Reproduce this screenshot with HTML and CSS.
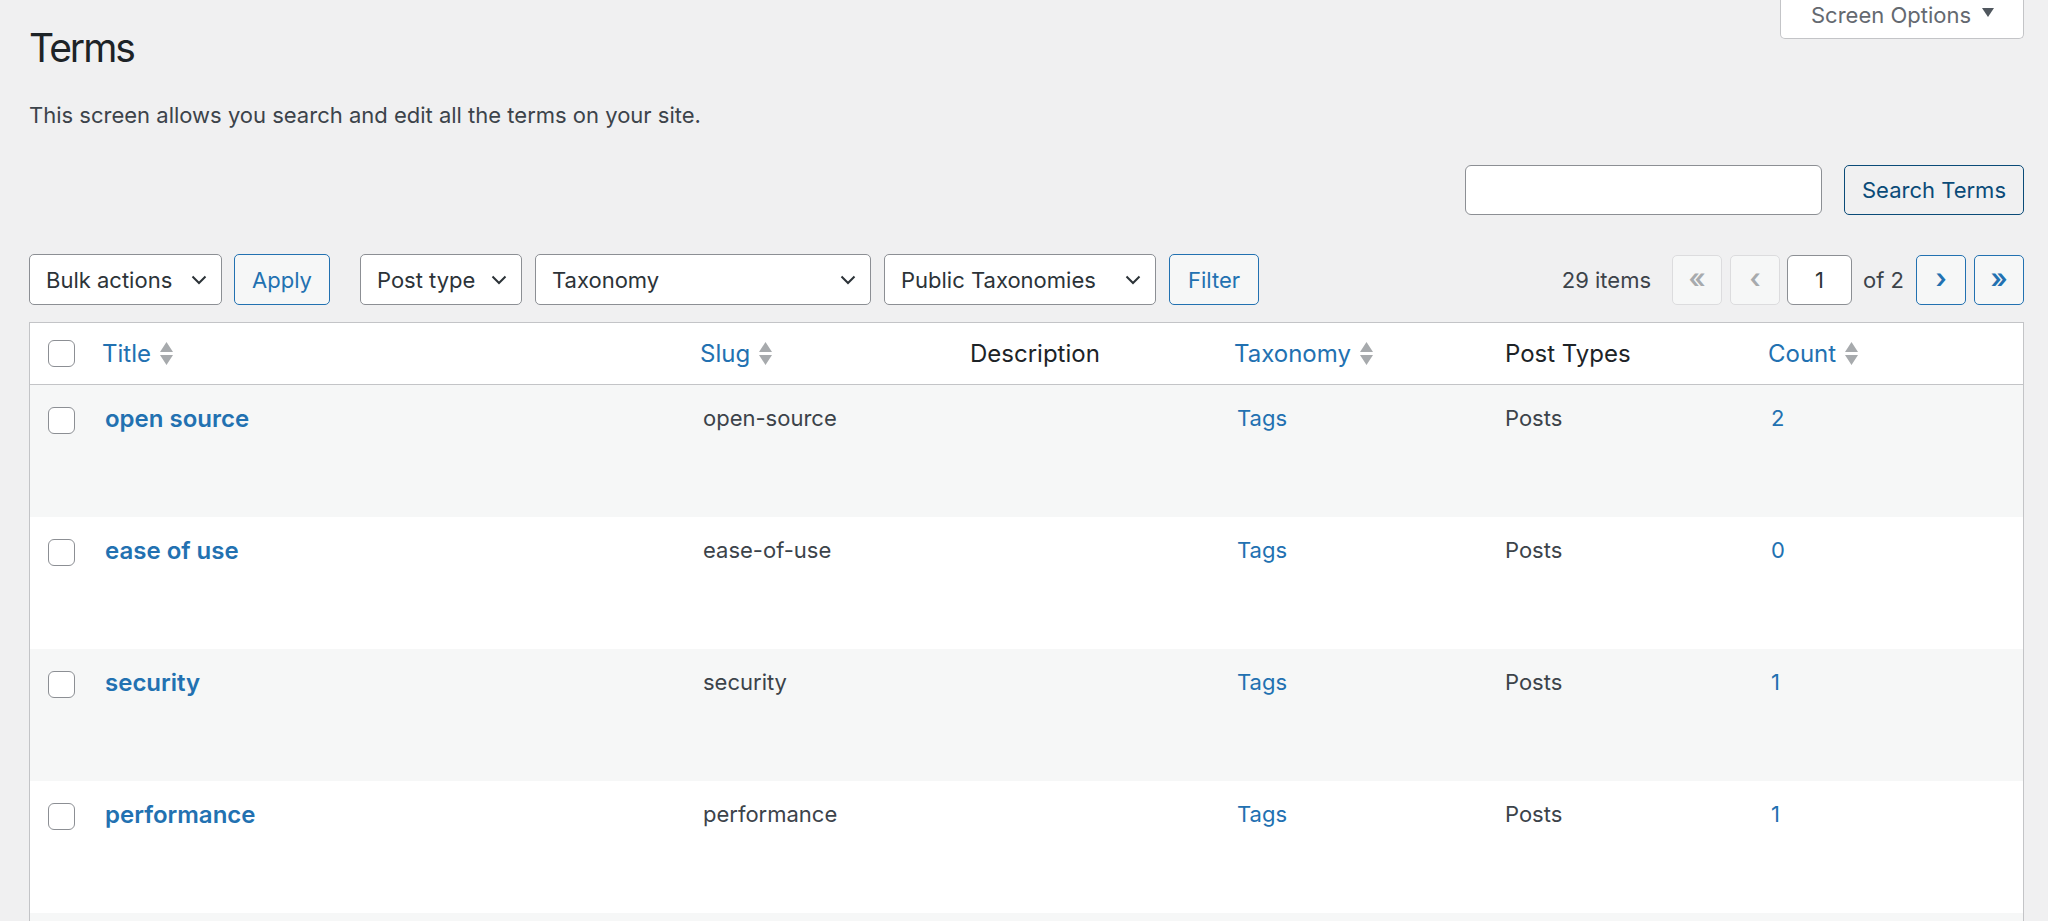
FILE: index.html
```html
<!DOCTYPE html>
<html lang="en">
<head>
    <meta charset="UTF-8">
    <meta name="viewport" content="width=device-width, initial-scale=1.0">
    <title>Terms</title>
    <link rel="stylesheet" href="styles.css">
</head>
<body>
    <div class="wrap">
        <!-- Aba de opções da tela -->
        <div class="screen-options">
            <span>Screen Options</span>
            <svg class="tri" width="12" height="9" viewBox="0 0 12 9"><path d="M0 0h12L6 9z" fill="#50575e"/></svg>
        </div>

        <h1>Terms</h1>
        <p class="intro">This screen allows you search and edit all the terms on your site.</p>

        <form class="search-box">
            <input type="search" class="search-input">
            <button type="button" class="btn btn-hover">Search Terms</button>
        </form>

        <div class="tablenav">
            <div class="actions">
                <label class="select w-bulk">
                    <select><option>Bulk actions</option></select>
                    <svg class="chev" width="16" height="10" viewBox="0 0 16 10"><path d="M1.5 1.5l6.5 6.5 6.5-6.5" fill="none" stroke="#2c3338" stroke-width="2"/></svg>
                </label>
                <button type="button" class="btn w-apply">Apply</button>
            </div>
            <div class="actions filters">
                <label class="select w-posttype">
                    <select><option>Post type</option></select>
                    <svg class="chev" width="16" height="10" viewBox="0 0 16 10"><path d="M1.5 1.5l6.5 6.5 6.5-6.5" fill="none" stroke="#2c3338" stroke-width="2"/></svg>
                </label>
                <label class="select w-taxonomy">
                    <select><option>Taxonomy</option></select>
                    <svg class="chev" width="16" height="10" viewBox="0 0 16 10"><path d="M1.5 1.5l6.5 6.5 6.5-6.5" fill="none" stroke="#2c3338" stroke-width="2"/></svg>
                </label>
                <label class="select w-public">
                    <select><option>Public Taxonomies</option></select>
                    <svg class="chev" width="16" height="10" viewBox="0 0 16 10"><path d="M1.5 1.5l6.5 6.5 6.5-6.5" fill="none" stroke="#2c3338" stroke-width="2"/></svg>
                </label>
                <button type="button" class="btn w-filter">Filter</button>
            </div>

            <div class="pagination">
                <span class="count">29 items</span>
                <span class="page-btn disabled">&laquo;</span>
                <span class="page-btn disabled">&lsaquo;</span>
                <input type="text" class="page-input" value="1">
                <span class="of">of 2</span>
                <a class="page-btn" href="#">&rsaquo;</a>
                <a class="page-btn" href="#">&raquo;</a>
            </div>
        </div>

        <table class="terms-table">
            <colgroup>
                <col class="c-cb">
                <col class="c-title">
                <col class="c-slug">
                <col class="c-desc">
                <col class="c-tax">
                <col class="c-types">
                <col class="c-count">
            </colgroup>
            <thead>
                <tr>
                    <th class="cb"><input type="checkbox"></th>
                    <th class="sortable"><a href="#">Title <svg class="sort" width="13" height="24" viewBox="0 0 13 24"><path d="M6.5 0L13 10H0z M0 13h13L6.5 23z" fill="#a7aaad"/></svg></a></th>
                    <th class="sortable"><a href="#">Slug <svg class="sort" width="13" height="24" viewBox="0 0 13 24"><path d="M6.5 0L13 10H0z M0 13h13L6.5 23z" fill="#a7aaad"/></svg></a></th>
                    <th>Description</th>
                    <th class="sortable"><a href="#">Taxonomy <svg class="sort" width="13" height="24" viewBox="0 0 13 24"><path d="M6.5 0L13 10H0z M0 13h13L6.5 23z" fill="#a7aaad"/></svg></a></th>
                    <th>Post Types</th>
                    <th class="sortable"><a href="#">Count <svg class="sort" width="13" height="24" viewBox="0 0 13 24"><path d="M6.5 0L13 10H0z M0 13h13L6.5 23z" fill="#a7aaad"/></svg></a></th>
                </tr>
            </thead>
            <tbody>
                <tr>
                    <td class="cb"><input type="checkbox"></td>
                    <td><a class="row-title" href="#">open source</a></td>
                    <td>open-source</td>
                    <td></td>
                    <td><a href="#">Tags</a></td>
                    <td>Posts</td>
                    <td><a href="#">2</a></td>
                </tr>
                <tr>
                    <td class="cb"><input type="checkbox"></td>
                    <td><a class="row-title" href="#">ease of use</a></td>
                    <td>ease-of-use</td>
                    <td></td>
                    <td><a href="#">Tags</a></td>
                    <td>Posts</td>
                    <td><a href="#">0</a></td>
                </tr>
                <tr>
                    <td class="cb"><input type="checkbox"></td>
                    <td><a class="row-title" href="#">security</a></td>
                    <td>security</td>
                    <td></td>
                    <td><a href="#">Tags</a></td>
                    <td>Posts</td>
                    <td><a href="#">1</a></td>
                </tr>
                <tr>
                    <td class="cb"><input type="checkbox"></td>
                    <td><a class="row-title" href="#">performance</a></td>
                    <td>performance</td>
                    <td></td>
                    <td><a href="#">Tags</a></td>
                    <td>Posts</td>
                    <td><a href="#">1</a></td>
                </tr>
                <tr>
                    <td class="cb"><input type="checkbox"></td>
                    <td><a class="row-title" href="#">privacy</a></td>
                    <td>privacy</td>
                    <td></td>
                    <td><a href="#">Tags</a></td>
                    <td>Posts</td>
                    <td><a href="#">1</a></td>
                </tr>
            </tbody>
        </table>
    </div>
</body>
</html>
```

FILE: styles.css
```css
body {
    margin: 0;
    padding: 0;
    background-color: #f0f0f1;
    color: #3c434a;
    font-family: Inter, "Noto Sans", sans-serif;
    font-size: 22px;
}

a {
    color: #2271b1;
    text-decoration: none;
}

.wrap {
    display: flow-root;
    padding: 0 24px 0 29px;
}

/* aba no topo direito */
.screen-options {
    float: right;
    width: 244px;
    height: 40px;
    margin-top: -1px;
    box-sizing: border-box;
    display: flex;
    align-items: center;
    justify-content: space-between;
    padding: 0 29px 8px 30px;
    background-color: #fff;
    border: 1px solid #c3c4c7;
    border-top: none;
    border-radius: 0 0 5px 5px;
    color: #646970;
}

.screen-options .tri {
    margin-top: -4px;
}

h1 {
    margin: 22px 0 0;
    font-size: 39px;
    font-weight: 400;
    letter-spacing: -2px;
    line-height: 52px;
    color: #1d2327;
}

.intro {
    margin: 25px 0 0;
    line-height: 33px;
}

.search-box {
    display: flex;
    justify-content: flex-end;
    gap: 22px;
    margin-top: 33px;
}

.search-input {
    width: 357px;
    height: 50px;
    box-sizing: border-box;
    border: 1px solid #8c8f94;
    border-radius: 6px;
    background-color: #fff;
    margin: 0;
}

.btn {
    height: 51px;
    box-sizing: border-box;
    padding: 0 16px;
    border: 1px solid #2271b1;
    border-radius: 5px;
    background-color: #f6f7f7;
    color: #2271b1;
    font-family: inherit;
    font-size: 22px;
}

.search-box .btn {
    width: 180px;
    height: 50px;
}

.btn-hover {
    background-color: #f0f0f1;
    border-color: #0a4b78;
    color: #0a4b78;
}

.tablenav {
    display: flex;
    align-items: center;
    margin-top: 39px;
    height: 51px;
}

.actions {
    display: flex;
    gap: 12px;
}

.filters {
    gap: 13px;
    margin-left: 30px;
}

.select {
    position: relative;
    display: block;
    height: 51px;
}

.select select {
    appearance: none;
    -webkit-appearance: none;
    width: 100%;
    height: 100%;
    margin: 0;
    padding: 0 40px 0 16px;
    border: 1px solid #8c8f94;
    border-radius: 5px;
    background-color: #fff;
    color: #2c3338;
    font-family: inherit;
    font-size: 22px;
}

.select .chev {
    position: absolute;
    right: 15px;
    top: 21px;
    pointer-events: none;
}

.w-bulk { width: 193px; }
.w-apply { width: 96px; }
.w-posttype { width: 162px; }
.w-taxonomy { width: 336px; }
.w-public { width: 272px; }
.w-filter { width: 90px; }

.pagination {
    margin-left: auto;
    display: flex;
    align-items: center;
    height: 50px;
}

.pagination .count {
    margin-right: 21px;
}

.page-btn {
    width: 50px;
    height: 50px;
    box-sizing: border-box;
    display: flex;
    align-items: center;
    justify-content: center;
    border: 1px solid #2271b1;
    border-radius: 5px;
    background-color: #f6f7f7;
    color: #2271b1;
    font-size: 27px;
    font-weight: 600;
    padding-bottom: 3px;
}

.page-btn + .page-btn {
    margin-left: 8px;
}

.page-btn.disabled {
    border-color: #dcdcde;
    color: #a7aaad;
}

.page-input {
    width: 65px;
    height: 50px;
    box-sizing: border-box;
    margin: 0 0 0 7px;
    border: 1px solid #8c8f94;
    border-radius: 6px;
    background-color: #fff;
    color: #2c3338;
    text-align: center;
    font-family: inherit;
    font-size: 22px;
}

.of {
    margin: 0 12px 0 11px;
}

/* tabela de termos */
.terms-table {
    width: 100%;
    margin-top: 17px;
    border: 1px solid #c3c4c7;
    border-spacing: 0;
    table-layout: fixed;
    background-color: #fff;
}

.c-cb { width: 58px; }
.c-title { width: 598px; }
.c-slug { width: 267px; }
.c-desc { width: 267px; }
.c-tax { width: 268px; }
.c-types { width: 266px; }
.c-count { width: 269px; }

.terms-table th {
    height: 61px;
    padding: 0 0 0 17px;
    border-bottom: 1px solid #c3c4c7;
    text-align: left;
    font-size: 24px;
    font-weight: 400;
    color: #1d2327;
    vertical-align: middle;
}

.terms-table th.sortable a {
    display: inline-flex;
    align-items: center;
    gap: 9px;
    margin-left: -3px;
}

.terms-table td {
    height: 132px;
    box-sizing: border-box;
    padding: 17px 0 0 17px;
    vertical-align: top;
    line-height: 33px;
}

.terms-table tbody tr:nth-child(odd) {
    background-color: #f6f7f7;
}

.terms-table .cb {
    padding-left: 18px;
}

.terms-table td.cb {
    padding-top: 22px;
}

.cb input {
    appearance: none;
    -webkit-appearance: none;
    display: block;
    width: 27px;
    height: 27px;
    margin: 0;
    border: 1px solid #8c8f94;
    border-radius: 6px;
    background-color: #fff;
}

.row-title {
    font-size: 24px;
    font-weight: 600;
}
```
